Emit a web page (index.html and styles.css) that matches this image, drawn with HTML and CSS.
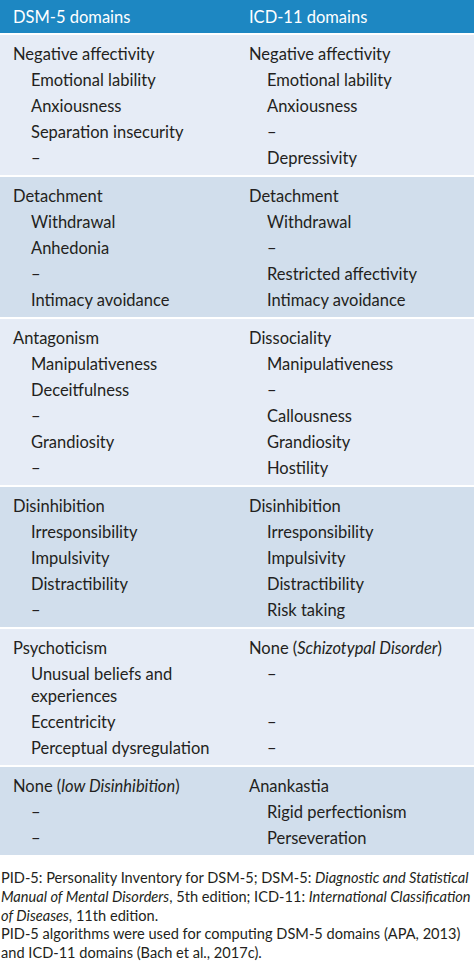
FILE: index.html
```html
<!DOCTYPE html>
<html lang="en">
<head>
<meta charset="utf-8">
<title>DSM-5 and ICD-11 domains</title>
<link rel="stylesheet" href="styles.css">
</head>
<body>
<div class="table">
  <div class="head">
    <div class="cell">DSM-5 domains</div>
    <div class="cell">ICD-11 domains</div>
  </div>

  <div class="group light">
    <div class="cell">Negative affectivity</div><div class="cell">Negative affectivity</div>
    <div class="cell sub">Emotional lability</div><div class="cell sub">Emotional lability</div>
    <div class="cell sub">Anxiousness</div><div class="cell sub">Anxiousness</div>
    <div class="cell sub">Separation insecurity</div><div class="cell sub">–</div>
    <div class="cell sub">–</div><div class="cell sub">Depressivity</div>
  </div>

  <div class="group dark">
    <div class="cell">Detachment</div><div class="cell">Detachment</div>
    <div class="cell sub">Withdrawal</div><div class="cell sub">Withdrawal</div>
    <div class="cell sub">Anhedonia</div><div class="cell sub">–</div>
    <div class="cell sub">–</div><div class="cell sub">Restricted affectivity</div>
    <div class="cell sub">Intimacy avoidance</div><div class="cell sub">Intimacy avoidance</div>
  </div>

  <div class="group light">
    <div class="cell">Antagonism</div><div class="cell">Dissociality</div>
    <div class="cell sub">Manipulativeness</div><div class="cell sub">Manipulativeness</div>
    <div class="cell sub">Deceitfulness</div><div class="cell sub">–</div>
    <div class="cell sub">–</div><div class="cell sub">Callousness</div>
    <div class="cell sub">Grandiosity</div><div class="cell sub">Grandiosity</div>
    <div class="cell sub">–</div><div class="cell sub">Hostility</div>
  </div>

  <div class="group dark">
    <div class="cell">Disinhibition</div><div class="cell">Disinhibition</div>
    <div class="cell sub">Irresponsibility</div><div class="cell sub">Irresponsibility</div>
    <div class="cell sub">Impulsivity</div><div class="cell sub">Impulsivity</div>
    <div class="cell sub">Distractibility</div><div class="cell sub">Distractibility</div>
    <div class="cell sub">–</div><div class="cell sub">Risk taking</div>
  </div>

  <div class="group light">
    <div class="cell">Psychoticism</div><div class="cell">None (<i>Schizotypal Disorder</i>)</div>
    <div class="cell sub">Unusual beliefs and experiences</div><div class="cell sub">–</div>
    <div class="cell sub">Eccentricity</div><div class="cell sub">–</div>
    <div class="cell sub">Perceptual dysregulation</div><div class="cell sub">–</div>
  </div>

  <div class="group dark">
    <div class="cell">None (<i>low Disinhibition</i>)</div><div class="cell">Anankastia</div>
    <div class="cell sub">–</div><div class="cell sub">Rigid perfectionism</div>
    <div class="cell sub">–</div><div class="cell sub">Perseveration</div>
  </div>
</div>

<div class="notes">
  <p>PID-5: Personality Inventory for DSM-5; DSM-5: <i>Diagnostic and Statistical Manual of Mental Disorders</i>, 5th edition; ICD-11: <i>International Classification of Diseases</i>, 11th edition.</p>
  <p>PID-5 algorithms were used for computing DSM-5 domains (APA, 2013) and ICD-11 domains (Bach et al., 2017c).</p>
</div>
</body>
</html>
```

FILE: styles.css
```css
html, body {
  margin: 0;
  padding: 0;
  background: #ffffff;
}

body {
  font-family: "Lato", "Open Sans", "DejaVu Sans", sans-serif;
  color: #231f20;
  width: 474px;
}

.table {
  display: flex;
  flex-direction: column;
  gap: 2px;
}

.head {
  display: grid;
  grid-template-columns: 236px 1fr;
  background: #1d87c2;
  color: #ffffff;
  height: 33px;
  align-items: center;
  font-size: 16.5px;
}

.head .cell {
  padding: 1px 0 0 13px;
}

.group {
  display: grid;
  grid-template-columns: 236px 1fr;
  padding: 5px 0 5px;
  font-size: 16.5px;
  line-height: 22px;
}

.light {
  background: #e6ecf6;
}

.dark {
  background: #d1deec;
}

.cell {
  padding: 3px 16px 1px 13px;
}

.cell.sub {
  padding-left: 31px;
}

.notes {
  margin-top: 14px;
  padding: 0 0 0 1px;
  font-size: 14.6px;
  line-height: 18.8px;
}

.notes p {
  margin: 0;
}
```
